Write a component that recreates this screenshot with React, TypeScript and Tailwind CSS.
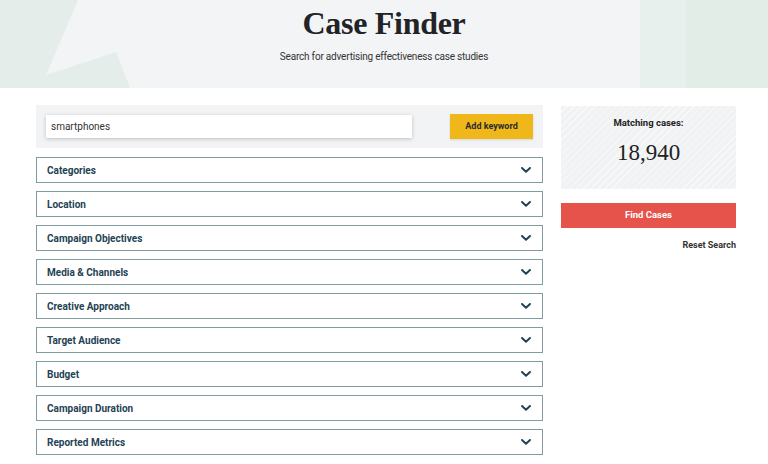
import React from "react";

const items = [
  "Categories",
  "Location",
  "Campaign Objectives",
  "Media & Channels",
  "Creative Approach",
  "Target Audience",
  "Budget",
  "Campaign Duration",
  "Reported Metrics",
];

function Chevron() {
  return (
    <svg width="10" height="6" viewBox="0 0 10 6" fill="none" className="mr-[1px]">
      <path d="M1 1 L5 4.8 L9 1" stroke="#1f4254" strokeWidth="1.9" strokeLinecap="round" strokeLinejoin="round" />
    </svg>
  );
}

export default function App() {
  return (
    <div className="w-[768px] h-[464px] overflow-hidden bg-white font-['Roboto',_'Liberation_Sans',_sans-serif]">
      <header className="relative h-[88px] bg-[#f2f4f6] overflow-hidden">
        <svg className="absolute inset-0" width="768" height="88" viewBox="0 0 768 88">
          <polygon points="0,0 78,0 46,75 116,52 130,88 0,88" fill="#e4ede9" />
          <rect x="640" y="0" width="46" height="88" fill="#e8f0ee" />
          <rect x="686" y="0" width="82" height="88" fill="#e2ede8" />
        </svg>
        <div className="relative flex flex-col items-center pt-[3px]">
          <h1 className="font-['Liberation_Serif',_serif] font-bold text-[32px] leading-[40px] text-[#222326] tracking-[-0.3px]">
            Case Finder
          </h1>
          <p className="mt-[7px] text-[10px] leading-[14px] text-[#333] tracking-[-0.2px]">
            Search for advertising effectiveness case studies
          </p>
        </div>
      </header>

      <main className="flex gap-[18px] ml-[36px] w-[700px] pt-[17px]">
        <div className="w-[507px] flex flex-col">
          <div className="h-[43px] bg-[#f2f3f5] flex items-center pl-[10px] pr-[10px]">
            <div className="w-[366px] h-[23px] bg-white shadow-[0_1px_4px_rgba(0,0,0,0.22)] flex items-center px-[5px] text-[10px] text-[#333]">
              smartphones
            </div>
            <button className="ml-auto w-[83px] h-[25px] bg-[#f0b71b] text-[9px] font-bold text-[#2b2b2b] shadow-[0_1px_2px_rgba(0,0,0,0.12)]">
              Add keyword
            </button>
          </div>
          <div className="flex flex-col gap-[8px] mt-[9px]">
            {items.map((t) => (
              <div
                key={t}
                className="h-[26px] border border-[#7f9c9f] flex items-center justify-between pl-[10px] pr-[10px] text-[10px] font-bold text-[#1f4254]"
              >
                <span>{t}</span>
                <Chevron />
              </div>
            ))}
          </div>
        </div>

        <div className="w-[175px] flex flex-col">
          <div className="h-[83px] mt-[1px] bg-[repeating-linear-gradient(135deg,#f1f2f4_0px,#f1f2f4_4px,#f8f9f9_4px,#f8f9f9_5px)] flex flex-col items-center pt-[10px]">
            <div className="text-[9.5px] font-bold text-[#222] leading-[14px]">Matching cases:</div>
            <div className="mt-[9px] font-['Liberation_Serif',_serif] text-[23px] leading-[28px] text-[#222]">18,940</div>
          </div>
          <button className="mt-[14px] h-[25px] bg-[#e5534b] text-white text-[9.5px] font-bold">
            Find Cases
          </button>
          <div className="mt-[10px] text-right text-[9px] font-bold text-[#333] leading-[14px]">Reset Search</div>
        </div>
      </main>
    </div>
  );
}
